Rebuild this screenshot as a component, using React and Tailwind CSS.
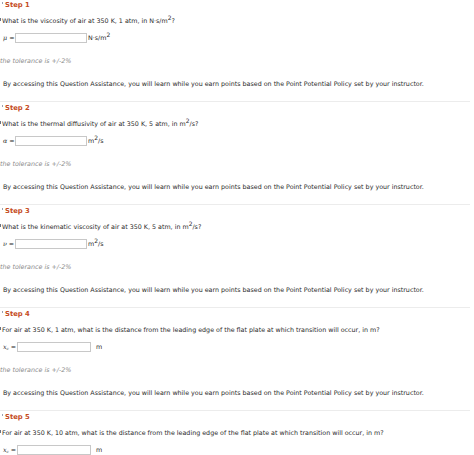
import React from "react";

const Sup = ({ children }) => (
  <sup className="text-[6px]">{children}</sup>
);

const STEPS = [
  {
    n: 1,
    question: (
      <>
        What is the viscosity of air at 350 K, 1 atm, in N·s/m<Sup>2</Sup>?
      </>
    ),
    label: <span className="font-['DejaVu_Serif',serif] italic">μ</span>,
    unit: (
      <>
        N·s/m<Sup>2</Sup>
      </>
    ),
  },
  {
    n: 2,
    question: (
      <>
        What is the thermal diffusivity of air at 350 K, 5 atm, in m<Sup>2</Sup>/s?
      </>
    ),
    label: <span className="font-['DejaVu_Serif',serif] italic">α</span>,
    unit: (
      <>
        m<Sup>2</Sup>/s
      </>
    ),
  },
  {
    n: 3,
    question: (
      <>
        What is the kinematic viscosity of air at 350 K, 5 atm, in m<Sup>2</Sup>/s?
      </>
    ),
    label: <span className="font-['DejaVu_Serif',serif] italic">ν</span>,
    unit: (
      <>
        m<Sup>2</Sup>/s
      </>
    ),
  },
  {
    n: 4,
    question:
      "For air at 350 K, 1 atm, what is the distance from the leading edge of the flat plate at which transition will occur, in m?",
    label: (
      <span className="font-['DejaVu_Serif',serif] italic">
        x<sub className="text-[4px]">c</sub>
      </span>
    ),
    unit: "m",
  },
  {
    n: 5,
    question:
      "For air at 350 K, 10 atm, what is the distance from the leading edge of the flat plate at which transition will occur, in m?",
    label: (
      <span className="font-['DejaVu_Serif',serif] italic">
        x<sub className="text-[4px]">c</sub>
      </span>
    ),
    unit: "m",
  },
];

const Step = ({ step, last }) => (
  <section className="flex flex-col">
    <div className="h-[11px] flex items-center pl-[2px]">
      <span className="w-[1px] h-[2px] bg-gray-400 self-start mt-[2px] mr-[2px]" />
      <span className="text-[6.8px] font-bold text-[#c54b1c]">Step {step.n}</span>
    </div>
    <p className="mt-[5px] h-[10px] flex items-center leading-none whitespace-nowrap">
      <span className="w-[1px] h-[3px] bg-gray-500 mr-[1px] self-start mt-[2px]" />
      <span>{step.question}</span>
    </p>
    <div className="mt-[7px] h-[10px] flex items-center leading-none">
      <span className="w-[15px] pl-[3px] flex items-center gap-[2px] whitespace-nowrap">
        {step.label}
        <span>=</span>
      </span>
      <span
        className={`h-[10px] border border-[#c8c8c8] bg-white ${
          step.n >= 4 ? "w-[74px] ml-[2px]" : "w-[72px]"
        }`}
      />
      <span className={step.n >= 4 ? "ml-[5px]" : "ml-[1px]"}>{step.unit}</span>
    </div>
    {!last && (
      <>
        <p className="mt-[13px] h-[10px] flex items-center italic text-[#8a8a8a] leading-none">
          the tolerance is +/-2%
        </p>
        <p className="mt-[13px] h-[10px] flex items-center pl-[3px] leading-none whitespace-nowrap">
          By accessing this Question Assistance, you will learn while you earn points based on the Point Potential Policy set by your instructor.
        </p>
        <div className="mt-[12px] h-[1px] bg-[#ececec] mr-[4px]" />
        <div className="h-[1px]" />
      </>
    )}
  </section>
);

export default function App() {
  return (
    <div className="w-[474px] h-[455px] overflow-hidden bg-white text-[#2b2b2b] text-[6.35px] font-['DejaVu_Sans','Liberation_Sans',sans-serif]">
      {STEPS.map((step, i) => (
        <Step key={step.n} step={step} last={i === STEPS.length - 1} />
      ))}
    </div>
  );
}
